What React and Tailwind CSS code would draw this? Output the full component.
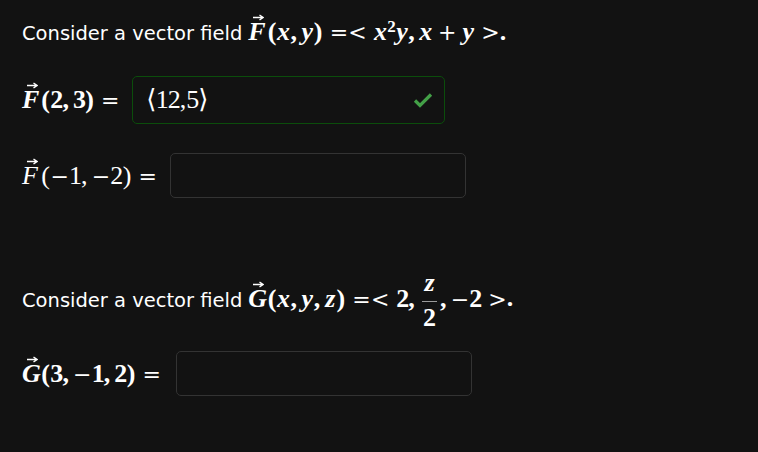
import React from 'react';

const serif = { fontFamily: '"Liberation Serif", "DejaVu Serif", serif' };

// glyph box with KaTeX-like advance widths (measured at 24px)
const B = ({ w, i, children, className = '' }) => (
  <span className={`inline-block text-center ${w} ${i ? 'italic' : ''} ${className}`}>{children}</span>
);

function Vec({ letter }) {
  return (
    <span className="relative inline-block w-[19px] italic">
      <svg
        width="11"
        height="7"
        viewBox="0 0 11 7"
        className="absolute left-[5px] top-[-5px]"
      >
        <path d="M0 3.5H9.5M6.5 1L10 3.5L6.5 6" stroke="#fff" strokeWidth="1.4" fill="none" />
      </svg>
      {letter}
    </span>
  );
}

// relations and minus drawn wider, like KaTeX_Main
const Op = ({ children }) => (
  <B w="w-[18.7px]" className="font-normal text-[22px] [font-family:'DejaVu_Serif',serif]">
    {children}
  </B>
);
const Sp = () => <span className="inline-block w-[6.7px]" />;
const Cm = () => (
  <>
    <B w="w-[6.7px]">,</B>
    <span className="inline-block w-[4px]" />
  </>
);
const D = ({ children }) => <B w="w-[12px]">{children}</B>;
const P = ({ children }) => <B w="w-[9.3px]">{children}</B>;
const X = () => <B w="w-[13.7px]" i>x</B>;
const Y = () => <B w="w-[12.5px]" i>y</B>;

function M({ children, className = '' }) {
  return (
    <span className={`text-[26px] leading-none text-white ${className}`} style={serif}>
      {children}
    </span>
  );
}

function Answer({ ok, children, width }) {
  return (
    <div
      className={`flex items-center justify-between rounded-[5px] border bg-[#121212] pl-[13px] pr-[11px] ${width} ${
        ok ? 'h-[48px] border-[#0b4d0b]' : 'h-[45px] border-[#333333]'
      }`}
    >
      <M>{children}</M>
      {ok && (
        <svg width="20" height="16" viewBox="0 0 20 16">
          <path d="M2 8.5L7 13.5L18 2.5" stroke="#43a047" strokeWidth="3.2" fill="none" />
        </svg>
      )}
    </div>
  );
}

export default function App() {
  return (
    <div
      className="h-[452px] w-[758px] bg-[#121212] pl-[22px] text-white"
      style={{ fontFamily: '"DejaVu Sans", sans-serif' }}
    >
      {/* First field */}
      <div className="flex items-baseline pt-[19px] text-[19.5px]">
        <span className="mr-[6px]">Consider a vector field</span>
        <M className="font-bold">
          <Vec letter="F" />
          <P>(</P>
          <X />
          <Cm />
          <Y />
          <P>)</P>
          <Sp />
          <Op>=</Op>
          <Op>&lt;</Op>
          <Sp />
          <X />
          <sup className="text-[17px]">2</sup>
          <Y />
          <Cm />
          <X />
          <span className="inline-block w-[5.3px]" />
          <Op>+</Op>
          <span className="inline-block w-[5.3px]" />
          <Y />
          <Sp />
          <Op>&gt;</Op>
          <span>.</span>
        </M>
      </div>

      <div className="mt-[28px] flex items-center">
        <M className="mr-[6px] font-bold">
          <Vec letter="F" />
          <P>(</P>
          <D>2</D>
          <Cm />
          <D>3</D>
          <P>)</P>
          <Sp />
          <Op>=</Op>
          <Sp />
        </M>
        <Answer ok width="w-[313px]">
          <P>⟨</P>
          <D>1</D>
          <D>2</D>
          <B w="w-[6.7px]">,</B>
          <D>5</D>
          <P>⟩</P>
        </Answer>
      </div>

      <div className="mt-[29px] flex items-center">
        <M className="mr-[6px]">
          <Vec letter="F" />
          <P>(</P>
          <Op>−</Op>
          <D>1</D>
          <Cm />
          <Op>−</Op>
          <D>2</D>
          <P>)</P>
          <Sp />
          <Op>=</Op>
          <Sp />
        </M>
        <Answer width="w-[296px]" />
      </div>

      {/* Second field */}
      <div className="mt-[72px] flex items-baseline text-[19.5px]">
        <span className="mr-[6px]">Consider a vector field</span>
        <M className="font-bold">
          <Vec letter="G" />
          <P>(</P>
          <X />
          <Cm />
          <Y />
          <Cm />
          <B w="w-[12px]" i>z</B>
          <P>)</P>
          <Sp />
          <Op>=</Op>
          <Op>&lt;</Op>
          <Sp />
          <D>2</D>
          <Cm />
          <span className="mx-[3px] inline-flex flex-col items-center align-middle">
            <i className="pb-[5px]">z</i>
            <span className="h-px w-[15px] bg-[#9a9a9a]"></span>
            <span className="pt-[3px]">2</span>
          </span>
          <Cm />
          <Op>−</Op>
          <D>2</D>
          <Sp />
          <Op>&gt;</Op>
          <span>.</span>
        </M>
      </div>

      <div className="mt-[20px] flex items-center">
        <M className="mr-[8px] font-bold">
          <Vec letter="G" />
          <P>(</P>
          <D>3</D>
          <Cm />
          <Op>−</Op>
          <D>1</D>
          <Cm />
          <D>2</D>
          <P>)</P>
          <Sp />
          <Op>=</Op>
          <Sp />
        </M>
        <Answer width="w-[296px]" />
      </div>
    </div>
  );
}
